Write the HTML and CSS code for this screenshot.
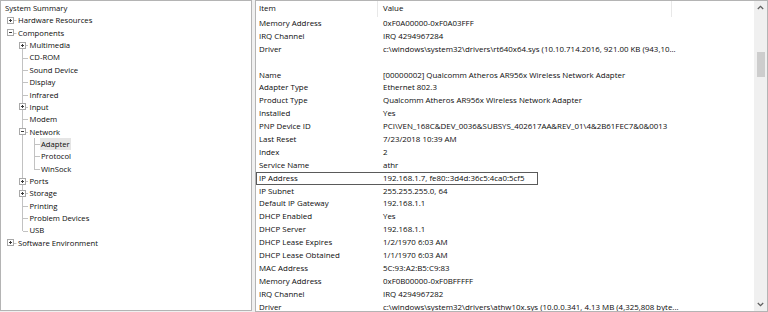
FILE: index.html
```html
<!DOCTYPE html>
<html>
<head>
<meta charset="utf-8">
<link rel="stylesheet" href="styles.css">
</head>
<body>
<div class="frame">
  <div class="tree-pane">
    <div class="row"><span class="label root">System Summary</span></div>
    <div class="row"><span class="g ex plus"></span><span class="label">Hardware Resources</span></div>
    <div class="row"><span class="g ex minus"></span><span class="label">Components</span></div>
    <div class="row"><span class="g"></span><span class="g ex plus down"></span><span class="label">Multimedia</span></div>
    <div class="row"><span class="g"></span><span class="g tee"></span><span class="label">CD-ROM</span></div>
    <div class="row"><span class="g"></span><span class="g tee"></span><span class="label">Sound Device</span></div>
    <div class="row"><span class="g"></span><span class="g tee"></span><span class="label">Display</span></div>
    <div class="row"><span class="g"></span><span class="g tee"></span><span class="label">Infrared</span></div>
    <div class="row"><span class="g"></span><span class="g ex plus thru"></span><span class="label">Input</span></div>
    <div class="row"><span class="g"></span><span class="g tee"></span><span class="label">Modem</span></div>
    <div class="row"><span class="g"></span><span class="g ex minus thru"></span><span class="label">Network</span></div>
    <div class="row"><span class="g"></span><span class="g vert"></span><span class="g tee"></span><span class="label sel">Adapter</span></div>
    <div class="row"><span class="g"></span><span class="g vert"></span><span class="g tee"></span><span class="label">Protocol</span></div>
    <div class="row"><span class="g"></span><span class="g vert"></span><span class="g elbow"></span><span class="label">WinSock</span></div>
    <div class="row"><span class="g"></span><span class="g ex plus thru"></span><span class="label">Ports</span></div>
    <div class="row"><span class="g"></span><span class="g ex plus thru"></span><span class="label">Storage</span></div>
    <div class="row"><span class="g"></span><span class="g tee"></span><span class="label">Printing</span></div>
    <div class="row"><span class="g"></span><span class="g tee"></span><span class="label">Problem Devices</span></div>
    <div class="row"><span class="g"></span><span class="g elbow"></span><span class="label">USB</span></div>
    <div class="row"><span class="g ex plus"></span><span class="label">Software Environment</span></div>
  </div>
  <div class="splitter"></div>
  <div class="list-pane">
    <div class="list">
      <div class="header">
        <div class="hcell item">Item</div>
        <div class="hcell value">Value</div>
        <div class="hcell rest"></div>
      </div>
      <div class="rows">
        <div class="lrow"><span class="item">Memory Address</span><span class="value">0xF0A00000-0xF0A03FFF</span></div>
        <div class="lrow"><span class="item">IRQ Channel</span><span class="value">IRQ 4294967284</span></div>
        <div class="lrow"><span class="item">Driver</span><span class="value">c:\windows\system32\drivers\rt640x64.sys (10.10.714.2016, 921.00 KB (943,10...</span></div>
        <div class="lrow"><span class="item"></span><span class="value"></span></div>
        <div class="lrow"><span class="item">Name</span><span class="value">[00000002] Qualcomm Atheros AR956x Wireless Network Adapter</span></div>
        <div class="lrow"><span class="item">Adapter Type</span><span class="value">Ethernet 802.3</span></div>
        <div class="lrow"><span class="item">Product Type</span><span class="value">Qualcomm Atheros AR956x Wireless Network Adapter</span></div>
        <div class="lrow"><span class="item">Installed</span><span class="value">Yes</span></div>
        <div class="lrow"><span class="item">PNP Device ID</span><span class="value">PCI\VEN_168C&amp;DEV_0036&amp;SUBSYS_402617AA&amp;REV_01\4&amp;2B61FEC7&amp;0&amp;0013</span></div>
        <div class="lrow"><span class="item">Last Reset</span><span class="value">7/23/2018 10:39 AM</span></div>
        <div class="lrow"><span class="item">Index</span><span class="value">2</span></div>
        <div class="lrow"><span class="item">Service Name</span><span class="value">athr</span></div>
        <div class="lrow focus"><span class="item">IP Address</span><span class="value">192.168.1.7, fe80::3d4d:36c5:4ca0:5cf5</span></div>
        <div class="lrow"><span class="item">IP Subnet</span><span class="value">255.255.255.0, 64</span></div>
        <div class="lrow"><span class="item">Default IP Gateway</span><span class="value">192.168.1.1</span></div>
        <div class="lrow"><span class="item">DHCP Enabled</span><span class="value">Yes</span></div>
        <div class="lrow"><span class="item">DHCP Server</span><span class="value">192.168.1.1</span></div>
        <div class="lrow"><span class="item">DHCP Lease Expires</span><span class="value">1/2/1970 6:03 AM</span></div>
        <div class="lrow"><span class="item">DHCP Lease Obtained</span><span class="value">1/1/1970 6:03 AM</span></div>
        <div class="lrow"><span class="item">MAC Address</span><span class="value">5C:93:A2:B5:C9:83</span></div>
        <div class="lrow"><span class="item">Memory Address</span><span class="value">0xF0B00000-0xF0BFFFFF</span></div>
        <div class="lrow"><span class="item">IRQ Channel</span><span class="value">IRQ 4294967282</span></div>
        <div class="lrow"><span class="item">Driver</span><span class="value">c:\windows\system32\drivers\athw10x.sys (10.0.0.341, 4.13 MB (4,325,808 byte...</span></div>
      </div>
    </div>
    <div class="scrollbar">
      <div class="arrow">
        <svg width="7" height="5" viewBox="0 0 7 5"><polyline points="0.8,4 3.5,1.3 6.2,4" fill="none" stroke="#606060" stroke-width="1.3"/></svg>
      </div>
      <div class="track"><div class="thumb"></div></div>
      <div class="arrow">
        <svg width="7" height="5" viewBox="0 0 7 5"><polyline points="0.8,1 3.5,3.7 6.2,1" fill="none" stroke="#606060" stroke-width="1.3"/></svg>
      </div>
    </div>
  </div>
</div>
</body>
</html>
```
FILE: styles.css
```css
html, body {
  margin: 0;
  padding: 0;
  background: #f0f0f0;
}
.frame {
  width: 768px;
  height: 312px;
  display: flex;
  font-family: "Open Sans", "Noto Sans", sans-serif;
  font-size: 7.9px;
  color: #0c0c0c;
  overflow: hidden;
}
.tree-pane {
  width: 250px;
  background: #fff;
  border: 1px solid #b4b4b4;
  padding-top: 1px;
  flex: none;
  height: 308px;
  font-size: 7.7px;
}
.row {
  height: 12.37px;
  display: flex;
  align-items: stretch;
  padding-left: 4px;
  white-space: nowrap;
}
.label {
  line-height: 12.37px;
  padding: 0 1px;
  margin-left: 0.5px;
}
.label.root {
  margin-left: 0;
  padding-left: 0;
}
.label.sel {
  background: #e5e5e5;
}
.g {
  width: 11.5px;
  flex: none;
  position: relative;
}
/* guide lines */
.g.vert::before,
.g.tee::before,
.g.elbow::before,
.g.thru::before,
.g.down::before {
  content: "";
  position: absolute;
  left: 5.5px;
  width: 1px;
  background: #c2c2c2;
}
.g.vert::before, .g.tee::before, .g.thru::before { top: 0; bottom: 0; }
.g.elbow::before { top: 0; height: 50%; }
.g.down::before { top: 50%; bottom: 0; }
.g.tee::after,
.g.elbow::after {
  content: "";
  position: absolute;
  left: 6px;
  width: 5.5px;
  top: 50%;
  height: 1px;
  background: #c2c2c2;
}
/* expander boxes */
.g.ex {
  background:
    linear-gradient(#c2c2c2, #c2c2c2) 9px 6px / 2.5px 1px no-repeat;
}
.g.ex::after {
  content: "";
  position: absolute;
  left: 2px;
  top: 2.5px;
  width: 5px;
  height: 5px;
  border: 1px solid #a8a8a8;
  background:
    linear-gradient(#3a3a3a, #3a3a3a) center / 3px 1px no-repeat,
    #fff;
  z-index: 1;
}
.g.ex.plus::after {
  background:
    linear-gradient(#3a3a3a, #3a3a3a) center / 3px 1px no-repeat,
    linear-gradient(#3a3a3a, #3a3a3a) center / 1px 3px no-repeat,
    #fff;
}
.splitter {
  width: 3px;
  flex: none;
}
.list-pane {
  flex: 1;
  height: 310px;
  background: #fff;
  border: 1px solid #b4b4b4;
  display: flex;
  overflow: hidden;
}
.list {
  flex: 1;
  overflow: hidden;
}
.header {
  height: 16px;
  display: flex;
}
.hcell {
  line-height: 15px;
  padding-left: 3px;
  box-sizing: border-box;
  white-space: nowrap;
}
.hcell.item {
  width: 122px;
  border-right: 1px solid #e8e8e8;
}
.hcell.value {
  width: 294px;
  padding-left: 5px;
  border-right: 1px solid #e8e8e8;
}
.rows {
  display: flex;
  flex-direction: column;
}
.lrow {
  height: 12.9px;
  display: flex;
  white-space: nowrap;
  box-sizing: border-box;
}
.lrow .item {
  width: 122px;
  flex: none;
  padding-left: 3px;
  line-height: 12.9px;
  box-sizing: border-box;
}
.lrow .value {
  padding-left: 5px;
  line-height: 12.9px;
}
.lrow.focus {
  width: 282px;
  outline: 1px solid #5a5a5a;
  outline-offset: -1px;
}
.scrollbar {
  width: 13px;
  flex: none;
  background: #f0f0f0;
  display: flex;
  flex-direction: column;
}
.arrow {
  height: 13px;
  display: flex;
  align-items: center;
  justify-content: center;
  flex: none;
}
.track {
  flex: 1;
}
.thumb {
  margin: 38px auto 0;
  width: 8px;
  height: 25px;
  background: #cdcdcd;
}
```
